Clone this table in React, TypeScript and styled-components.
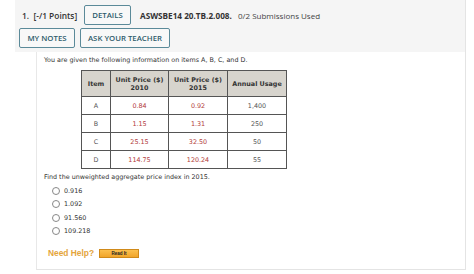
import styled, { createGlobalStyle } from 'styled-components';

const GlobalStyle = createGlobalStyle`
  html, body {
    margin: 0;
    padding: 0;
    background: #ffffff;
  }
  body {
    font-family: 'Open Sans', 'DejaVu Sans', sans-serif;
  }
`;

const Shell = styled.div`
  width: 450px;
  margin-left: 15px;
  border-right: 1px solid #e4e4e4;
  height: 270px;
  display: flex;
  flex-direction: column;
`;

const Header = styled.div`
  background: #f5f5f5;
  height: 52px;
  padding: 5px 0 0 4px;
  box-sizing: border-box;
  display: flex;
  flex-direction: column;
  gap: 3px;
`;

const HeaderRow = styled.div`
  display: flex;
  align-items: center;
  height: 20px;
  white-space: pre;
`;

const Points = styled.span`
  flex: none;
  font-size: 8.4px;
  font-weight: 600;
  color: #333;
  margin-left: 3px;
  width: 62px;
`;

const Code = styled.span`
  flex: none;
  font-size: 8.2px;
  font-weight: 700;
  color: #333;
  margin-left: 9px;
  width: 98px;
`;

const Used = styled.span`
  font-size: 8px;
  color: #444;
`;

const OutlineButton = styled.div<{ $w: number }>`
  flex: none;
  width: ${(p) => p.$w}px;
  height: 20px;
  box-sizing: border-box;
  border: 1px solid #5b8a99;
  border-radius: 2px;
  background: #f8f8f8;
  color: #2d5b6b;
  font-size: 7.8px;
  font-weight: 600;
  display: flex;
  align-items: center;
  justify-content: center;
`;

const ButtonRow = styled(HeaderRow)`
  gap: 5px;
`;

const Content = styled.div`
  flex: 1;
  margin-left: 21px;
  border-left: 1px solid #e8e8e8;
  border-bottom: 1px solid #e4e4e4;
  padding: 3px 0 0 7px;
  font-family: 'DejaVu Sans', Verdana, sans-serif;
  font-size: 6.4px;
  color: #333;
`;

const Para = styled.div`
  height: 10px;
  line-height: 10px;
`;

const Table = styled.table`
  border-collapse: collapse;
  margin: 5px 0 0 37px;
  table-layout: fixed;
  width: 201px;
`;

const Th = styled.th<{ $w: number }>`
  width: ${(p) => p.$w}px;
  background: #d7d4cd;
  border: 1px solid #555;
  font-weight: 700;
  color: #333;
  height: 25px;
  padding: 0;
  line-height: 8px;
`;

const Td = styled.td<{ $red?: boolean }>`
  border: 1px solid #555;
  text-align: center;
  height: 17px;
  padding: 0;
  color: ${(p) => (p.$red ? '#b23a3a' : '#555')};
`;

const Question = styled.div`
  margin-top: 3px;
  height: 10px;
  line-height: 10px;
`;

const Options = styled.div`
  display: flex;
  flex-direction: column;
  padding-left: 8px;
  margin-top: 4px;
  gap: 4px;
`;

const Option = styled.label`
  display: flex;
  align-items: center;
  gap: 4px;
  height: 9.5px;
`;

const Radio = styled.span`
  width: 8px;
  height: 8px;
  border-radius: 50%;
  border: 1px solid #888;
  box-sizing: border-box;
  background: #fff;
`;

const HelpRow = styled.div`
  display: flex;
  align-items: center;
  gap: 5px;
  margin-top: 12px;
  padding-left: 4px;
`;

const NeedHelp = styled.span`
  font-family: 'Liberation Sans', Arial, sans-serif;
  font-weight: 700;
  font-size: 8.4px;
  color: #e4a53c;
`;

const ReadIt = styled.div`
  width: 40px;
  height: 9px;
  box-sizing: border-box;
  border: 1px solid #d08a1a;
  background: linear-gradient(#fbc04f, #f1a52a);
  font-family: 'Liberation Sans', Arial, sans-serif;
  font-weight: 700;
  font-size: 4.5px;
  color: #222;
  display: flex;
  align-items: center;
  justify-content: center;
`;

const rows = [
  ['A', '0.84', '0.92', '1,400'],
  ['B', '1.15', '1.31', '250'],
  ['C', '25.15', '32.50', '50'],
  ['D', '114.75', '120.24', '55'],
];

const options = ['0.916', '1.092', '91.560', '109.218'];

export default function App() {
  return (
    <>
      <GlobalStyle />
      <Shell>
        <Header>
          <HeaderRow>
            <Points>1.  [-/1 Points]</Points>
            <OutlineButton $w={47}>DETAILS</OutlineButton>
            <Code>ASWSBE14 20.TB.2.008.</Code>
            <Used>0/2 Submissions Used</Used>
          </HeaderRow>
          <ButtonRow>
            <OutlineButton $w={56}>MY NOTES</OutlineButton>
            <OutlineButton $w={90}>ASK YOUR TEACHER</OutlineButton>
          </ButtonRow>
        </Header>
        <Content>
          <Para>You are given the following information on items A, B, C, and D.</Para>
          <Table>
            <thead>
              <tr>
                <Th $w={28}>Item</Th>
                <Th $w={57}>Unit Price ($)<br />2010</Th>
                <Th $w={58}>Unit Price ($)<br />2015</Th>
                <Th $w={58}>Annual Usage</Th>
              </tr>
            </thead>
            <tbody>
              {rows.map((r) => (
                <tr key={r[0]}>
                  <Td>{r[0]}</Td>
                  <Td $red>{r[1]}</Td>
                  <Td $red>{r[2]}</Td>
                  <Td>{r[3]}</Td>
                </tr>
              ))}
            </tbody>
          </Table>
          <Question>Find the unweighted aggregate price index in 2015.</Question>
          <Options>
            {options.map((o) => (
              <Option key={o}>
                <Radio />
                {o}
              </Option>
            ))}
          </Options>
          <HelpRow>
            <NeedHelp>Need Help?</NeedHelp>
            <ReadIt>Read It</ReadIt>
          </HelpRow>
        </Content>
      </Shell>
    </>
  );
}
